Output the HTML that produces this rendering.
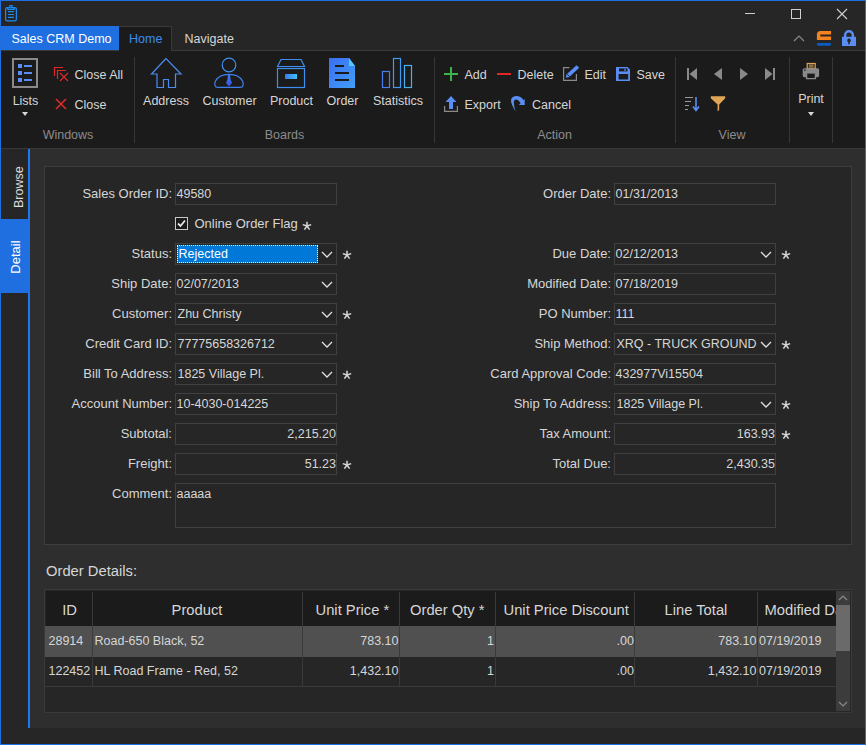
<!DOCTYPE html>
<html><head><meta charset="utf-8"><style>
html,body{margin:0;padding:0;width:866px;height:745px;overflow:hidden;background:#262626;}
body{position:relative;font-family:"Liberation Sans", sans-serif;}
.t{position:absolute;white-space:nowrap;font-family:"Liberation Sans", sans-serif;}
.r{position:absolute;}
svg.r{overflow:visible;}
</style></head><body>
<div class="r" style="left:0px;top:0px;width:866px;height:745px;background:#262626;"></div>
<div class="r" style="left:1px;top:51px;width:864px;height:97px;background:#1b1b1b;"></div>
<div class="r" style="left:1px;top:50px;width:864px;height:1px;background:#3a3a3a;"></div>
<div class="r" style="left:1px;top:26px;width:118px;height:24px;background:#1f6fe0;"></div>
<div class="t" style="left:11.5px;top:31px;font-size:12.5px;line-height:16px;color:#ffffff;">Sales CRM Demo</div>
<div class="r" style="left:119px;top:26px;width:52px;height:25px;background:#1b1b1b;"></div>
<div class="r" style="left:119px;top:26px;width:52px;height:1px;background:#3a3a3a;"></div>
<div class="r" style="left:171px;top:26px;width:1px;height:25px;background:#3a3a3a;"></div>
<div class="t" style="left:129px;top:31px;font-size:12.5px;line-height:16px;color:#3b8cf0;">Home</div>
<div class="t" style="left:184.5px;top:31px;font-size:12.5px;line-height:16px;color:#d6d6d6;">Navigate</div>
<svg class="r" style="left:4px;top:4px" width="15" height="18" viewBox="0 0 15 18"><g fill="none" stroke="#1a8cf0" stroke-width="1.2"><rect x="1.6" y="3.6" width="10.8" height="13.2" rx="1.6"/><path d="M3.8 3.6V5.4H10.2V3.6M5.9 3.6V1.5H8.1V3.6"/><path d="M4 7.6H10M4 10.5H10M4 13.4H10"/></g></svg>
<div class="r" style="left:745px;top:13px;width:10px;height:1px;background:#d0d0d0;"></div>
<div class="r" style="left:791px;top:9px;width:10px;height:10px;box-sizing:border-box;border:1px solid #d0d0d0;"></div>
<svg class="r" style="left:836px;top:8px" width="12" height="12" viewBox="0 0 12 12"><path d="M1 1L11 11M11 1L1 11" stroke="#d0d0d0" stroke-width="1.1"/></svg>
<svg class="r" style="left:793px;top:34px" width="12" height="8" viewBox="0 0 12 8"><path d="M1 7L6 2L11 7" fill="none" stroke="#8a8a8a" stroke-width="1.2"/></svg>
<svg class="r" style="left:816px;top:30px" width="16" height="17" viewBox="0 0 16 17"><path d="M15.1 0.9H4.6Q0.9 0.9 0.9 4.6V10H14.6Q15.1 10 15.1 9.5V6.5H4.3V4.4H14.6Q15.1 4.4 15.1 3.9Z" fill="#f5841f"/><rect x="0.9" y="12.9" width="14.2" height="2.9" rx="1.45" fill="#0a5cc0"/></svg>
<svg class="r" style="left:841px;top:29px" width="16" height="18" viewBox="0 0 16 18"><path d="M4.15 8.5V6A3.85 3.85 0 0 1 11.85 6V8.5" fill="none" stroke="#5b8ef5" stroke-width="2.5"/><rect x="1" y="7.8" width="14" height="9.2" fill="#5b8ef5"/><circle cx="8" cy="11.4" r="1.8" fill="#262626"/><rect x="7.2" y="11.6" width="1.6" height="3.6" fill="#262626"/></svg>
<div class="r" style="left:134px;top:57px;width:1px;height:86px;background:#363636;"></div>
<div class="r" style="left:434px;top:57px;width:1px;height:86px;background:#363636;"></div>
<div class="r" style="left:675px;top:57px;width:1px;height:86px;background:#363636;"></div>
<div class="r" style="left:789px;top:57px;width:1px;height:86px;background:#363636;"></div>
<div class="r" style="left:832px;top:57px;width:1px;height:86px;background:#363636;"></div>
<div class="t" style="left:-232px;width:600px;text-align:center;top:127px;font-size:12.5px;line-height:16px;color:#8c8c8c;">Windows</div>
<div class="t" style="left:-15.5px;width:600px;text-align:center;top:127px;font-size:12.5px;line-height:16px;color:#8c8c8c;">Boards</div>
<div class="t" style="left:254.5px;width:600px;text-align:center;top:127px;font-size:12.5px;line-height:16px;color:#8c8c8c;">Action</div>
<div class="t" style="left:432px;width:600px;text-align:center;top:127px;font-size:12.5px;line-height:16px;color:#8c8c8c;">View</div>
<div class="r" style="left:12px;top:58px;width:26px;height:30px;box-sizing:border-box;border:2px solid #8a8a8a;"></div>
<div class="r" style="left:18px;top:64px;width:4px;height:4px;background:#5b8ef5;"></div>
<div class="r" style="left:24px;top:65px;width:8px;height:2px;background:#5b8ef5;"></div>
<div class="r" style="left:18px;top:71px;width:4px;height:4px;background:#5b8ef5;"></div>
<div class="r" style="left:24px;top:72px;width:8px;height:2px;background:#5b8ef5;"></div>
<div class="r" style="left:18px;top:78px;width:4px;height:4px;background:#5b8ef5;"></div>
<div class="r" style="left:24px;top:79px;width:8px;height:2px;background:#5b8ef5;"></div>
<div class="t" style="left:-274.5px;width:600px;text-align:center;top:93px;font-size:12.5px;line-height:16px;color:#d6d6d6;">Lists</div>
<svg class="r" style="left:22px;top:112px" width="6" height="4" viewBox="0 0 6 4"><path d="M0 0H6L3 4Z" fill="#d8d8d8"/></svg>
<svg class="r" style="left:53px;top:66px" width="16" height="16" viewBox="0 0 16 16"><g fill="none" stroke="#e02828" stroke-width="1.2"><path d="M1.5 10V1.5H10"/><path d="M4.5 13V4.5H13"/><path d="M7 7L15 15M15 7L7 15"/></g></svg>
<div class="t" style="left:74.5px;top:67px;font-size:12.5px;line-height:16px;color:#d6d6d6;">Close All</div>
<svg class="r" style="left:55px;top:98px" width="12" height="12" viewBox="0 0 12 12"><path d="M1 1L11 11M11 1L1 11" stroke="#e02828" stroke-width="1.6"/></svg>
<div class="t" style="left:74.5px;top:97px;font-size:12.5px;line-height:16px;color:#d6d6d6;">Close</div>
<svg class="r" style="left:150px;top:57px" width="33" height="32" viewBox="0 0 33 32"><path d="M16 1.5L1.5 17H7V30.5H13.5V22.5H18.5V30.5H25.5V17H31Z" fill="none" stroke="#4a8cf0" stroke-width="1.2" stroke-linejoin="miter"/></svg>
<div class="t" style="left:-134px;width:600px;text-align:center;top:93px;font-size:12.5px;line-height:16px;color:#d6d6d6;">Address</div>
<svg class="r" style="left:213px;top:57px" width="33" height="32" viewBox="0 0 33 32"><defs><linearGradient id="tg" x1="0" y1="0" x2="0" y2="1"><stop offset="0" stop-color="#3a7ef0"/><stop offset="1" stop-color="#3a50e0"/></linearGradient></defs><circle cx="16" cy="8" r="6.8" fill="none" stroke="#3f8ef0" stroke-width="1.2"/><path d="M5 30.4C1.5 30.4 1 27 2.5 24C5 19.5 10 17.4 16 17.4C22 17.4 27 19.5 29.5 24C31 27 30.5 30.4 27 30.4Z" fill="none" stroke="#3f80f0" stroke-width="1.2"/><path d="M15 18H17L17.6 22.5L19 26L16 29.5L13 26L14.4 22.5Z" fill="url(#tg)"/></svg>
<div class="t" style="left:-70.5px;width:600px;text-align:center;top:93px;font-size:12.5px;line-height:16px;color:#d6d6d6;">Customer</div>
<svg class="r" style="left:276px;top:57px" width="30" height="32" viewBox="0 0 30 32"><defs><linearGradient id="pg" x1="0" y1="0" x2="1" y2="0"><stop offset="0" stop-color="#3a78f0"/><stop offset="1" stop-color="#3fc0f8"/></linearGradient></defs><g fill="none" stroke="#3f8ef0" stroke-width="1.2"><path d="M1.5 9.5L5 2.5H25L28.5 9.5Z"/><rect x="1.5" y="11.5" width="27" height="19"/></g><rect x="9" y="17" width="12" height="5" fill="url(#pg)"/></svg>
<div class="t" style="left:-8.5px;width:600px;text-align:center;top:93px;font-size:12.5px;line-height:16px;color:#d6d6d6;">Product</div>
<svg class="r" style="left:329px;top:58px" width="26" height="30" viewBox="0 0 26 30"><defs><linearGradient id="og" x1="0" y1="0" x2="1" y2="1"><stop offset="0" stop-color="#3a6ef0"/><stop offset="1" stop-color="#40a0f8"/></linearGradient></defs><path d="M0 0H20L26 8V30H0Z" fill="url(#og)"/><path d="M20 0V8H26Z" fill="#50c8f8"/><rect x="6" y="7" width="9" height="2" fill="#1b1b1b"/><rect x="6" y="14" width="14" height="2" fill="#1b1b1b"/><rect x="6" y="21" width="14" height="2" fill="#1b1b1b"/></svg>
<div class="t" style="left:42.5px;width:600px;text-align:center;top:93px;font-size:12.5px;line-height:16px;color:#d6d6d6;">Order</div>
<svg class="r" style="left:381px;top:57px" width="32" height="32" viewBox="0 0 32 32"><g fill="none" stroke-width="1.2"><rect x="1.5" y="14.5" width="7" height="16" stroke="#4a7ef0"/><rect x="12.5" y="1.5" width="7" height="29" stroke="#3f9af0"/><rect x="23.5" y="8.5" width="7" height="22" stroke="#48b0f0"/></g></svg>
<div class="t" style="left:98px;width:600px;text-align:center;top:93px;font-size:12.5px;line-height:16px;color:#d6d6d6;">Statistics</div>
<svg class="r" style="left:444px;top:67px" width="14" height="14" viewBox="0 0 14 14"><path d="M7 0V14M0 7H14" stroke="#3cb44a" stroke-width="2"/></svg>
<div class="t" style="left:464.5px;top:67px;font-size:12.5px;line-height:16px;color:#d6d6d6;">Add</div>
<div class="r" style="left:497px;top:73px;width:14px;height:2px;background:#e02828;"></div>
<div class="t" style="left:517.5px;top:67px;font-size:12.5px;line-height:16px;color:#d6d6d6;">Delete</div>
<svg class="r" style="left:563px;top:66px" width="17" height="16" viewBox="0 0 17 16"><path d="M6.5 1.6H0.6V14.4H13.4V8" fill="none" stroke="#8a8a8a" stroke-width="1.2"/><path d="M2.8 11.8L3.6 8.3L13.6 -0.8L16.2 1.8L6.3 11.1Z" fill="#5b8ef5"/><path d="M3.9 7.9L6.7 10.7" stroke="#1b1b1b" stroke-width="0.8"/></svg>
<div class="t" style="left:584.5px;top:67px;font-size:12.5px;line-height:16px;color:#d6d6d6;">Edit</div>
<svg class="r" style="left:616px;top:67px" width="14" height="14" viewBox="0 0 14 14"><path d="M0 0H11.5L14 2.5V14H0Z" fill="#5b8ef5"/><rect x="3" y="1.4" width="8.5" height="3" fill="#1b1b1b"/><rect x="8.3" y="1.8" width="1.4" height="2" fill="#5b8ef5"/><rect x="2.6" y="7" width="9.6" height="5.5" fill="#1b1b1b"/></svg>
<div class="t" style="left:636.5px;top:67px;font-size:12.5px;line-height:16px;color:#d6d6d6;">Save</div>
<svg class="r" style="left:444px;top:95px" width="14" height="18" viewBox="0 0 14 18"><path d="M7 1L12.5 7H9V14H5V7H1.5Z" fill="#5b8ef5"/><path d="M0.6 11V16.4H13.4V11" fill="none" stroke="#8a8a8a" stroke-width="1.2"/></svg>
<div class="t" style="left:464.5px;top:97px;font-size:12.5px;line-height:16px;color:#d6d6d6;">Export</div>
<svg class="r" style="left:507px;top:92px" width="22" height="22" viewBox="0 0 22 22"><path d="M8.6 19.6C6 15 3.6 11 4.1 7.6C4.8 4.6 7.6 3.8 9.8 3.9C13 4.1 15.4 5.8 16.6 8.2L17.7 6.9L17.7 13.1L11.8 13.1L13.6 11.2C12.3 9.2 10.5 7.4 8.6 7.6C7.1 7.9 6.6 9.8 6.9 12C7.3 15 8.1 17.5 8.6 19.6Z" fill="#5b8ef5"/></svg>
<div class="t" style="left:532px;top:97px;font-size:12.5px;line-height:16px;color:#d6d6d6;">Cancel</div>
<svg class="r" style="left:686px;top:67px" width="90" height="14" viewBox="0 0 90 14"><g fill="#8a8a8a"><rect x="1" y="1" width="2" height="12"/><path d="M11 1V13L3.5 7Z"/><path d="M36 1V13L28 7Z"/><path d="M54 1V13L62 7Z"/><path d="M79 1V13L86.5 7Z"/><rect x="87" y="1" width="2" height="12"/></g></svg>
<svg class="r" style="left:684px;top:96px" width="16" height="16" viewBox="0 0 16 16"><g fill="#9a9a9a"><rect x="1" y="1" width="8" height="1"/><rect x="1" y="5" width="6" height="1"/><rect x="1" y="9" width="4" height="1"/><rect x="1" y="13" width="3" height="1"/></g><path d="M12 1V14M9 10.5L12 14.5L15 10.5" fill="none" stroke="#5b8ef5" stroke-width="1.6"/></svg>
<svg class="r" style="left:710px;top:95px" width="16" height="17" viewBox="0 0 16 17"><path d="M0.8 1.2H15.2V3.2L9.2 9.5V15L7.6 16.2V9.5L0.8 3.2Z" fill="#e0a655"/></svg>
<svg class="r" style="left:802px;top:62px" width="18" height="18" viewBox="0 0 18 18"><rect x="5.2" y="1.5" width="8" height="5" fill="none" stroke="#e0a655" stroke-width="1.2"/><rect x="6.8" y="2.6" width="4.8" height="1" fill="#e0a655"/><rect x="6.8" y="4.4" width="4.8" height="1" fill="#e0a655"/><rect x="0.7" y="6.2" width="16.4" height="9" rx="1.6" fill="#8a8a8a"/><rect x="2.2" y="7.4" width="1.4" height="1.4" fill="#1b1b1b"/><rect x="4" y="11.6" width="10" height="4.2" fill="#1b1b1b"/><path d="M4.6 11.2V16.6H13.4V11.2" fill="none" stroke="#8a8a8a" stroke-width="1.3"/></svg>
<div class="t" style="left:511px;width:600px;text-align:center;top:91px;font-size:12.5px;line-height:16px;color:#d6d6d6;">Print</div>
<svg class="r" style="left:808px;top:112px" width="6" height="4" viewBox="0 0 6 4"><path d="M0 0H6L3 4Z" fill="#d8d8d8"/></svg>
<div class="r" style="left:1px;top:148px;width:864px;height:1px;background:#383838;"></div>
<div class="r" style="left:1px;top:149px;width:27px;height:70px;background:#262626;"></div>
<div class="r" style="left:28px;top:149px;width:2px;height:579px;background:#1e78f5;"></div>
<div class="r" style="left:1px;top:219px;width:29px;height:74px;background:#1f6fe0;"></div>
<div class="t" style="left:-1.5px;top:180px;width:40px;height:16px;font-size:12.5px;line-height:16px;color:#dcdcdc;text-align:center;transform:rotate(-90deg)">Browse</div>
<div class="t" style="left:-4px;top:249px;width:40px;height:16px;font-size:13px;line-height:16px;color:#ffffff;text-align:center;transform:rotate(-90deg)">Detail</div>
<div class="r" style="left:30px;top:149px;width:835px;height:579px;background:#2e2e2e;"></div>
<div class="r" style="left:44px;top:166px;width:808px;height:379px;background:#262626;box-sizing:border-box;border:1px solid #3e3e3e;"></div>
<div class="t" style="right:694px;text-align:right;top:185px;font-size:13px;line-height:17px;color:#d6d6d6;">Sales Order ID:</div>
<div class="r" style="left:175px;top:183px;width:162px;height:22px;background:#262626;box-sizing:border-box;border:1px solid #404040;"></div>
<div class="t" style="left:176.5px;top:186px;font-size:12.5px;line-height:16px;color:#d6d6d6;">49580</div>
<div class="t" style="right:694px;text-align:right;top:245px;font-size:13px;line-height:17px;color:#d6d6d6;">Status:</div>
<div class="r" style="left:175px;top:243px;width:162px;height:22px;background:#262626;box-sizing:border-box;border:1px solid #404040;"></div>
<svg class="r" style="left:321px;top:251px" width="12" height="7" viewBox="0 0 12 7"><path d="M1 1L6 6L11 1" fill="none" stroke="#e0e0e0" stroke-width="1.3"/></svg>
<svg class="r" style="left:342px;top:250px" width="10" height="10" viewBox="0 0 10 10"><g stroke="#d8d8d8" stroke-width="1.5" stroke-linecap="butt"><path d="M5 5V0.8"/><path d="M5 5L9.2 3.6"/><path d="M5 5L0.8 3.6"/><path d="M5 5L7.6 8.6"/><path d="M5 5L2.4 8.6"/></g></svg>
<div class="t" style="right:694px;text-align:right;top:275px;font-size:13px;line-height:17px;color:#d6d6d6;">Ship Date:</div>
<div class="r" style="left:175px;top:273px;width:162px;height:22px;background:#262626;box-sizing:border-box;border:1px solid #404040;"></div>
<div class="t" style="left:176.5px;top:276px;font-size:12.5px;line-height:16px;color:#d6d6d6;">02/07/2013</div>
<svg class="r" style="left:321px;top:281px" width="12" height="7" viewBox="0 0 12 7"><path d="M1 1L6 6L11 1" fill="none" stroke="#e0e0e0" stroke-width="1.3"/></svg>
<div class="t" style="right:694px;text-align:right;top:305px;font-size:13px;line-height:17px;color:#d6d6d6;">Customer:</div>
<div class="r" style="left:175px;top:303px;width:162px;height:22px;background:#262626;box-sizing:border-box;border:1px solid #404040;"></div>
<div class="t" style="left:177.5px;top:306px;font-size:12.5px;line-height:16px;color:#d6d6d6;">Zhu Christy</div>
<svg class="r" style="left:321px;top:311px" width="12" height="7" viewBox="0 0 12 7"><path d="M1 1L6 6L11 1" fill="none" stroke="#e0e0e0" stroke-width="1.3"/></svg>
<svg class="r" style="left:342px;top:310px" width="10" height="10" viewBox="0 0 10 10"><g stroke="#d8d8d8" stroke-width="1.5" stroke-linecap="butt"><path d="M5 5V0.8"/><path d="M5 5L9.2 3.6"/><path d="M5 5L0.8 3.6"/><path d="M5 5L7.6 8.6"/><path d="M5 5L2.4 8.6"/></g></svg>
<div class="t" style="right:694px;text-align:right;top:335px;font-size:13px;line-height:17px;color:#d6d6d6;">Credit Card ID:</div>
<div class="r" style="left:175px;top:333px;width:162px;height:22px;background:#262626;box-sizing:border-box;border:1px solid #404040;"></div>
<div class="t" style="left:177.5px;top:336px;font-size:12.5px;line-height:16px;color:#d6d6d6;">77775658326712</div>
<svg class="r" style="left:321px;top:341px" width="12" height="7" viewBox="0 0 12 7"><path d="M1 1L6 6L11 1" fill="none" stroke="#e0e0e0" stroke-width="1.3"/></svg>
<div class="t" style="right:694px;text-align:right;top:365px;font-size:13px;line-height:17px;color:#d6d6d6;">Bill To Address:</div>
<div class="r" style="left:175px;top:363px;width:162px;height:22px;background:#262626;box-sizing:border-box;border:1px solid #404040;"></div>
<div class="t" style="left:177.5px;top:366px;font-size:12.5px;line-height:16px;color:#d6d6d6;">1825 Village Pl.</div>
<svg class="r" style="left:321px;top:371px" width="12" height="7" viewBox="0 0 12 7"><path d="M1 1L6 6L11 1" fill="none" stroke="#e0e0e0" stroke-width="1.3"/></svg>
<svg class="r" style="left:342px;top:370px" width="10" height="10" viewBox="0 0 10 10"><g stroke="#d8d8d8" stroke-width="1.5" stroke-linecap="butt"><path d="M5 5V0.8"/><path d="M5 5L9.2 3.6"/><path d="M5 5L0.8 3.6"/><path d="M5 5L7.6 8.6"/><path d="M5 5L2.4 8.6"/></g></svg>
<div class="t" style="right:694px;text-align:right;top:395px;font-size:13px;line-height:17px;color:#d6d6d6;">Account Number:</div>
<div class="r" style="left:175px;top:393px;width:162px;height:22px;background:#262626;box-sizing:border-box;border:1px solid #404040;"></div>
<div class="t" style="left:176.5px;top:396px;font-size:12.5px;line-height:16px;color:#d6d6d6;">10-4030-014225</div>
<div class="t" style="right:694px;text-align:right;top:425px;font-size:13px;line-height:17px;color:#d6d6d6;">Subtotal:</div>
<div class="r" style="left:175px;top:423px;width:162px;height:22px;background:#262626;box-sizing:border-box;border:1px solid #404040;"></div>
<div class="t" style="right:530px;text-align:right;top:426px;font-size:12.5px;line-height:16px;color:#d6d6d6;">2,215.20</div>
<div class="t" style="right:694px;text-align:right;top:455px;font-size:13px;line-height:17px;color:#d6d6d6;">Freight:</div>
<div class="r" style="left:175px;top:453px;width:162px;height:22px;background:#262626;box-sizing:border-box;border:1px solid #404040;"></div>
<div class="t" style="right:530px;text-align:right;top:456px;font-size:12.5px;line-height:16px;color:#d6d6d6;">51.23</div>
<svg class="r" style="left:342px;top:460px" width="10" height="10" viewBox="0 0 10 10"><g stroke="#d8d8d8" stroke-width="1.5" stroke-linecap="butt"><path d="M5 5V0.8"/><path d="M5 5L9.2 3.6"/><path d="M5 5L0.8 3.6"/><path d="M5 5L7.6 8.6"/><path d="M5 5L2.4 8.6"/></g></svg>
<div class="t" style="right:255px;text-align:right;top:185px;font-size:13px;line-height:17px;color:#d6d6d6;">Order Date:</div>
<div class="r" style="left:614px;top:183px;width:162px;height:22px;background:#262626;box-sizing:border-box;border:1px solid #404040;"></div>
<div class="t" style="left:615.5px;top:186px;font-size:12.5px;line-height:16px;color:#d6d6d6;">01/31/2013</div>
<div class="t" style="right:255px;text-align:right;top:245px;font-size:13px;line-height:17px;color:#d6d6d6;">Due Date:</div>
<div class="r" style="left:614px;top:243px;width:162px;height:22px;background:#262626;box-sizing:border-box;border:1px solid #404040;"></div>
<div class="t" style="left:615.5px;top:246px;font-size:12.5px;line-height:16px;color:#d6d6d6;">02/12/2013</div>
<svg class="r" style="left:760px;top:251px" width="12" height="7" viewBox="0 0 12 7"><path d="M1 1L6 6L11 1" fill="none" stroke="#e0e0e0" stroke-width="1.3"/></svg>
<svg class="r" style="left:781px;top:250px" width="10" height="10" viewBox="0 0 10 10"><g stroke="#d8d8d8" stroke-width="1.5" stroke-linecap="butt"><path d="M5 5V0.8"/><path d="M5 5L9.2 3.6"/><path d="M5 5L0.8 3.6"/><path d="M5 5L7.6 8.6"/><path d="M5 5L2.4 8.6"/></g></svg>
<div class="t" style="right:255px;text-align:right;top:275px;font-size:13px;line-height:17px;color:#d6d6d6;">Modified Date:</div>
<div class="r" style="left:614px;top:273px;width:162px;height:22px;background:#262626;box-sizing:border-box;border:1px solid #404040;"></div>
<div class="t" style="left:615.5px;top:276px;font-size:12.5px;line-height:16px;color:#d6d6d6;">07/18/2019</div>
<div class="t" style="right:255px;text-align:right;top:305px;font-size:13px;line-height:17px;color:#d6d6d6;">PO Number:</div>
<div class="r" style="left:614px;top:303px;width:162px;height:22px;background:#262626;box-sizing:border-box;border:1px solid #404040;"></div>
<div class="t" style="left:615.5px;top:306px;font-size:12.5px;line-height:16px;color:#d6d6d6;">111</div>
<div class="t" style="right:255px;text-align:right;top:335px;font-size:13px;line-height:17px;color:#d6d6d6;">Ship Method:</div>
<div class="r" style="left:614px;top:333px;width:162px;height:22px;background:#262626;box-sizing:border-box;border:1px solid #404040;"></div>
<div class="t" style="left:616.5px;top:336px;font-size:12.5px;line-height:16px;color:#d6d6d6;">XRQ - TRUCK GROUND</div>
<svg class="r" style="left:760px;top:341px" width="12" height="7" viewBox="0 0 12 7"><path d="M1 1L6 6L11 1" fill="none" stroke="#e0e0e0" stroke-width="1.3"/></svg>
<svg class="r" style="left:781px;top:340px" width="10" height="10" viewBox="0 0 10 10"><g stroke="#d8d8d8" stroke-width="1.5" stroke-linecap="butt"><path d="M5 5V0.8"/><path d="M5 5L9.2 3.6"/><path d="M5 5L0.8 3.6"/><path d="M5 5L7.6 8.6"/><path d="M5 5L2.4 8.6"/></g></svg>
<div class="t" style="right:255px;text-align:right;top:365px;font-size:13px;line-height:17px;color:#d6d6d6;">Card Approval Code:</div>
<div class="r" style="left:614px;top:363px;width:162px;height:22px;background:#262626;box-sizing:border-box;border:1px solid #404040;"></div>
<div class="t" style="left:615.5px;top:366px;font-size:12.5px;line-height:16px;color:#d6d6d6;">432977Vi15504</div>
<div class="t" style="right:255px;text-align:right;top:395px;font-size:13px;line-height:17px;color:#d6d6d6;">Ship To Address:</div>
<div class="r" style="left:614px;top:393px;width:162px;height:22px;background:#262626;box-sizing:border-box;border:1px solid #404040;"></div>
<div class="t" style="left:616.5px;top:396px;font-size:12.5px;line-height:16px;color:#d6d6d6;">1825 Village Pl.</div>
<svg class="r" style="left:760px;top:401px" width="12" height="7" viewBox="0 0 12 7"><path d="M1 1L6 6L11 1" fill="none" stroke="#e0e0e0" stroke-width="1.3"/></svg>
<svg class="r" style="left:781px;top:400px" width="10" height="10" viewBox="0 0 10 10"><g stroke="#d8d8d8" stroke-width="1.5" stroke-linecap="butt"><path d="M5 5V0.8"/><path d="M5 5L9.2 3.6"/><path d="M5 5L0.8 3.6"/><path d="M5 5L7.6 8.6"/><path d="M5 5L2.4 8.6"/></g></svg>
<div class="t" style="right:255px;text-align:right;top:425px;font-size:13px;line-height:17px;color:#d6d6d6;">Tax Amount:</div>
<div class="r" style="left:614px;top:423px;width:162px;height:22px;background:#262626;box-sizing:border-box;border:1px solid #404040;"></div>
<div class="t" style="right:91px;text-align:right;top:426px;font-size:12.5px;line-height:16px;color:#d6d6d6;">163.93</div>
<svg class="r" style="left:781px;top:430px" width="10" height="10" viewBox="0 0 10 10"><g stroke="#d8d8d8" stroke-width="1.5" stroke-linecap="butt"><path d="M5 5V0.8"/><path d="M5 5L9.2 3.6"/><path d="M5 5L0.8 3.6"/><path d="M5 5L7.6 8.6"/><path d="M5 5L2.4 8.6"/></g></svg>
<div class="t" style="right:255px;text-align:right;top:455px;font-size:13px;line-height:17px;color:#d6d6d6;">Total Due:</div>
<div class="r" style="left:614px;top:453px;width:162px;height:22px;background:#262626;box-sizing:border-box;border:1px solid #404040;"></div>
<div class="t" style="right:91px;text-align:right;top:456px;font-size:12.5px;line-height:16px;color:#d6d6d6;">2,430.35</div>
<div class="r" style="left:177px;top:245px;width:141px;height:18px;background:#0078d7;outline:1px dotted #ffffff;outline-offset:-1px;"></div>
<div class="t" style="left:178.5px;top:246px;font-size:12.5px;line-height:16px;color:#ffffff;">Rejected</div>
<div class="r" style="left:175px;top:217px;width:13px;height:13px;background:#1b1b1b;box-sizing:border-box;border:1px solid #c8c8c8;"></div>
<svg class="r" style="left:177px;top:219px" width="9" height="9" viewBox="0 0 9 9"><path d="M1 4.5L3.5 7L8 1.5" fill="none" stroke="#e8e8e8" stroke-width="1.8"/></svg>
<div class="t" style="left:194.5px;top:215px;font-size:13px;line-height:17px;color:#d6d6d6;">Online Order Flag</div>
<svg class="r" style="left:302px;top:221px" width="10" height="10" viewBox="0 0 10 10"><g stroke="#d8d8d8" stroke-width="1.5" stroke-linecap="butt"><path d="M5 5V0.8"/><path d="M5 5L9.2 3.6"/><path d="M5 5L0.8 3.6"/><path d="M5 5L7.6 8.6"/><path d="M5 5L2.4 8.6"/></g></svg>
<div class="t" style="right:694px;text-align:right;top:485px;font-size:13px;line-height:17px;color:#d6d6d6;">Comment:</div>
<div class="r" style="left:175px;top:483px;width:601px;height:45px;background:#262626;box-sizing:border-box;border:1px solid #404040;"></div>
<div class="t" style="left:176.5px;top:486px;font-size:12.5px;line-height:16px;color:#d6d6d6;">aaaaa</div>
<div class="t" style="left:46px;top:562px;font-size:14.75px;line-height:19px;color:#d6d6d6;">Order Details:</div>
<div class="r" style="left:44px;top:589px;width:808px;height:124px;background:#262626;box-sizing:border-box;border:1px solid #3a3a3a;"></div>
<div class="r" style="left:46px;top:591px;width:790px;height:35px;background:#1b1b1b;"></div>
<div class="r" style="left:45px;top:626px;width:791px;height:31px;background:#505050;"></div>
<div class="r" style="left:45px;top:686px;width:791px;height:1px;background:#3a3a3a;"></div>
<div class="r" style="left:92px;top:592px;width:1px;height:94px;background:#3a3a3a;"></div>
<div class="r" style="left:302px;top:592px;width:1px;height:94px;background:#3a3a3a;"></div>
<div class="r" style="left:399px;top:592px;width:1px;height:94px;background:#3a3a3a;"></div>
<div class="r" style="left:495px;top:592px;width:1px;height:94px;background:#3a3a3a;"></div>
<div class="r" style="left:634px;top:592px;width:1px;height:94px;background:#3a3a3a;"></div>
<div class="r" style="left:757px;top:592px;width:1px;height:94px;background:#3a3a3a;"></div>
<div class="t" style="left:-230.5px;width:600px;text-align:center;top:601px;font-size:14.75px;line-height:19px;color:#d6d6d6;">ID</div>
<div class="t" style="left:-103px;width:600px;text-align:center;top:601px;font-size:14.75px;line-height:19px;color:#d6d6d6;">Product</div>
<div class="t" style="left:315.5px;top:601px;font-size:14.75px;line-height:19px;color:#d6d6d6;">Unit Price *</div>
<div class="t" style="left:410px;top:601px;font-size:14.75px;line-height:19px;color:#d6d6d6;">Order Qty *</div>
<div class="t" style="left:503.5px;top:601px;font-size:14.75px;line-height:19px;color:#d6d6d6;">Unit Price Discount</div>
<div class="t" style="left:664.5px;top:601px;font-size:14.75px;line-height:19px;color:#d6d6d6;">Line Total</div>
<div class="r" style="left:758px;top:590px;width:78px;height:36px;overflow:hidden">
<div class="t" style="left:6.5px;top:11px;font-size:14.75px;line-height:19px;color:#d6d6d6;">Modified Date</div>
</div>
<div class="t" style="left:48.5px;top:633px;font-size:12.5px;line-height:16px;color:#d6d6d6;">28914</div>
<div class="t" style="left:94.5px;top:633px;font-size:12.5px;line-height:16px;color:#d6d6d6;">Road-650 Black, 52</div>
<div class="t" style="right:467.5px;text-align:right;top:633px;font-size:12.5px;line-height:16px;color:#d6d6d6;">783.10</div>
<div class="t" style="right:372px;text-align:right;top:633px;font-size:12.5px;line-height:16px;color:#d6d6d6;">1</div>
<div class="t" style="right:232px;text-align:right;top:633px;font-size:12.5px;line-height:16px;color:#d6d6d6;">.00</div>
<div class="t" style="right:109.5px;text-align:right;top:633px;font-size:12.5px;line-height:16px;color:#d6d6d6;">783.10</div>
<div class="t" style="left:759px;top:633px;font-size:12.5px;line-height:16px;color:#d6d6d6;">07/19/2019</div>
<div class="t" style="left:48.5px;top:663px;font-size:12.5px;line-height:16px;color:#d6d6d6;">122452</div>
<div class="t" style="left:94.5px;top:663px;font-size:12.5px;line-height:16px;color:#d6d6d6;">HL Road Frame - Red, 52</div>
<div class="t" style="right:467.5px;text-align:right;top:663px;font-size:12.5px;line-height:16px;color:#d6d6d6;">1,432.10</div>
<div class="t" style="right:372px;text-align:right;top:663px;font-size:12.5px;line-height:16px;color:#d6d6d6;">1</div>
<div class="t" style="right:232px;text-align:right;top:663px;font-size:12.5px;line-height:16px;color:#d6d6d6;">.00</div>
<div class="t" style="right:109.5px;text-align:right;top:663px;font-size:12.5px;line-height:16px;color:#d6d6d6;">1,432.10</div>
<div class="t" style="left:759px;top:663px;font-size:12.5px;line-height:16px;color:#d6d6d6;">07/19/2019</div>
<div class="r" style="left:836px;top:591px;width:14px;height:120px;background:#3c3c3c;"></div>
<div class="r" style="left:836px;top:605px;width:14px;height:46px;background:#6a6a6a;"></div>
<svg class="r" style="left:838px;top:594px" width="10" height="8" viewBox="0 0 10 8"><path d="M1 6L5 2L9 6" fill="none" stroke="#8a8a8a" stroke-width="1.2"/></svg>
<svg class="r" style="left:838px;top:700px" width="10" height="8" viewBox="0 0 10 8"><path d="M1 2L5 6L9 2" fill="none" stroke="#8a8a8a" stroke-width="1.2"/></svg>
<div class="r" style="left:0;top:0;width:866px;height:745px;box-sizing:border-box;border:1px solid #1f6fe0"></div>
</body></html>
